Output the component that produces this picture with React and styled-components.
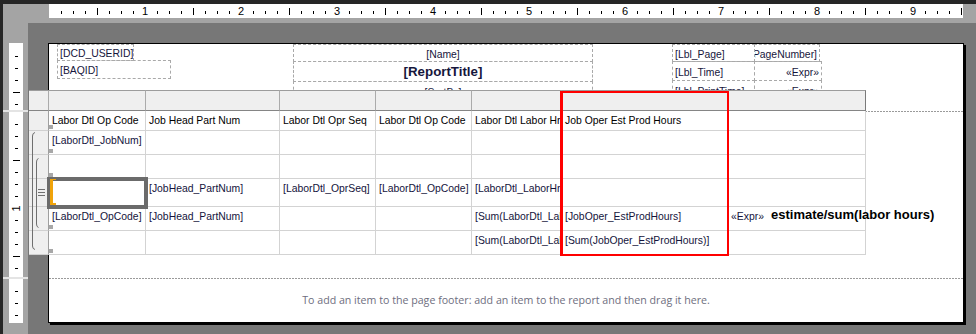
import React from "react";
import styled, { createGlobalStyle, css } from "styled-components";

const GlobalStyle = createGlobalStyle`
  html, body { margin:0; padding:0; background:#777; overflow:hidden; }
  body { font-family:"Liberation Sans", Arial, sans-serif; }
`;

const Frame = styled.div`
  width:976px;
  height:334px;
  box-sizing:border-box;
  border-left:3px solid #262626;
  background:#a4a4a4;
  display:flex;
  flex-direction:column;
`;

const TopStrip = styled.div`
  height:4px;
  background:#262626;
`;

const RulerRow = styled.div`
  height:14px;
  display:flex;
`;

const RulerPad = styled.div`
  width:${(p) => p.$w ? p.$w + "px" : "auto"};
  flex:${(p) => p.$w ? "none" : "1"};
  background:#a4a4a4;
`;

const Ruler = styled.div`
  width:914px;
  height:14px;
  background:#fff;
  display:flex;
  padding-left:6px;
  box-sizing:border-box;
  overflow:hidden;
`;

const Slot = styled.div`
  flex:0 0 12px;
  display:flex;
  align-items:center;
  justify-content:center;
`;

const HTick = styled.span`
  width:1px;
  height:${(p) => p.$long ? 7 : 3}px;
  margin-top:${(p) => p.$long ? 1 : 3}px;
  background:#000;
`;

const RulerNum = styled.span`
  font-size:11px;
  line-height:11px;
  color:#000;
`;

const Band = styled.div`
  height:5px;
  background:#a4a4a4;
`;

const Body = styled.div`
  flex:1;
  display:flex;
  min-height:0;
`;

const Rail = styled.div`
  width:25px;
  box-sizing:border-box;
  padding:20px 5px 0 6px;
  background:#a4a4a4;
  display:flex;
  flex-direction:column;
`;

const VSeg = styled.div`
  height:${(p) => p.$h}px;
  box-sizing:border-box;
  padding-top:${(p) => p.$pad}px;
  background:#fff;
  overflow:hidden;
  display:flex;
  flex-direction:column;
`;

const VSlot = styled.div`
  flex:0 0 12px;
  display:flex;
  align-items:center;
  justify-content:center;
`;

const VTick = styled.span`
  height:1px;
  width:${(p) => p.$long ? 7 : 3}px;
  background:#000;
`;

const VNum = styled.span`
  font-size:11px;
  line-height:11px;
  transform:rotate(-90deg);
`;

const VGap = styled.div`
  height:2px;
  margin:0 -5px 0 -6px;
  background:#e4e4e4;
`;

const Workspace = styled.div`
  flex:1;
  background:#777;
  padding:20px 0 0 20px;
`;

const Page = styled.div`
  position:relative;
  width:914px;
  height:278px;
  background:#fff;
  border:1px solid #000;
  box-shadow:2px 2px 0 #000;
  display:flex;
  flex-direction:column;
`;

const Section = styled.div`
  position:relative;
  height:${(p) => p.$h}px;
  flex:none;
`;

const Divider = styled.div`
  height:1px;
  flex:none;
  background:repeating-linear-gradient(90deg, #9a9a9a 0 2px, transparent 2px 3px);
`;

const Footer = styled.div`
  flex:1;
  display:flex;
  align-items:center;
  justify-content:center;
  padding-bottom:1px;
  font-family:"Open Sans", sans-serif;
  font-size:10.65px;
  color:#6e6e7e;
`;

const TextBox = styled.div`
  position:absolute;
  left:${(p) => p.$x}px;
  top:${(p) => p.$y}px;
  width:${(p) => p.$w}px;
  height:${(p) => p.$h}px;
  box-sizing:border-box;
  border:1px dashed #a9a9a9;
  ${(p) => p.$solidBottom && css`border-bottom:1px solid #b0b0b0;`}
  padding:${(p) => p.$bold ? "0 2px" : "2px 2px 0"};
  display:flex;
  align-items:center;
  justify-content:${(p) => p.$align === "right" ? "flex-end" : p.$align === "center" ? "center" : "flex-start"};
  overflow:hidden;
  white-space:nowrap;
  font-size:${(p) => p.$bold ? 13.3 : 10.4}px;
  font-weight:${(p) => p.$bold ? 700 : 400};
  color:#16163c;
`;

const Table = styled.div`
  position:absolute;
  left:-20px;
  top:46px;
  display:grid;
  grid-template-columns:20px 97px 134px 96px 96px 90px 166px 138px;
  grid-template-rows:21px 20px 24px 24px 28px 24px 24px;
  z-index:2;
`;

const BandCell = styled.div`
  box-sizing:border-box;
  background:#efefef;
  border-top:1px solid #9c9c9c;
  border-bottom:1px solid #858585;
  border-right:1px solid ${(p) => p.$end ? "#7a7a7a" : "#ababab"};
`;

const GutterCell = styled.div`
  box-sizing:border-box;
  background:#efefef;
  border-right:1px solid #9f9f9f;
  border-bottom:1px solid #d0d0d0;
`;

const Cell = styled.div`
  position:relative;
  box-sizing:border-box;
  background:#fff;
  border-right:1px solid #d3d3d3;
  border-bottom:1px solid #d3d3d3;
  padding:3px 3px 0;
  font-size:10.4px;
  line-height:13px;
  white-space:nowrap;
  overflow:hidden;
  color:${(p) => p.$label ? "#000" : "#14143c"};
  ${(p) => p.$notch && css`
    &::after {
      content:"";
      position:absolute;
      left:0;
      bottom:1px;
      width:4px;
      height:4px;
      background:#a8a8a8;
    }
  `}
  ${(p) => p.$selected && css`
    outline:4px solid #6b6b6b;
    outline-offset:-2px;
    z-index:1;
  `}
`;

const Bracket = styled.span`
  position:absolute;
  left:1px;
  top:-1px;
  width:3px;
  height:23px;
  border:3px solid #f0a30a;
  border-right:none;
  border-top-width:2px;
  border-bottom-width:2px;
  z-index:2;
`;

const GutterMarks = styled.svg`
  position:absolute;
  left:0;
  top:0;
  pointer-events:none;
  z-index:3;
`;

const RedFrame = styled.div`
  position:absolute;
  left:511px;
  top:47px;
  width:169px;
  height:165px;
  box-sizing:border-box;
  border:2px solid #f00;
  border-left-width:3px;
  z-index:4;
`;

const Note = styled.div`
  position:absolute;
  left:722px;
  top:163px;
  font-size:13px;
  font-weight:700;
  color:#000;
  white-space:nowrap;
  z-index:3;
`;

const columns = [97, 134, 96, 96, 90, 166, 138];

const labels = [
  "Labor Dtl Op Code",
  "Job Head Part Num",
  "Labor Dtl Opr Seq",
  "Labor Dtl Op Code",
  "Labor Dtl Labor Hrs",
  "Job Oper Est Prod Hours",
  "",
];

const rows = [
  { notch: true, cells: ["[LaborDtl_JobNum]", "", "", "", "", "", ""] },
  { notch: true, cells: ["", "", "", "", "", "", ""] },
  { selected: true, cells: ["", "[JobHead_PartNum]", "[LaborDtl_OprSeq]", "[LaborDtl_OpCode]", "[LaborDtl_LaborHrs]", "", ""] },
  { notch: true, cells: ["[LaborDtl_OpCode]", "[JobHead_PartNum]", "", "", "[Sum(LaborDtl_LaborHrs)]", "[JobOper_EstProdHours]", "«Expr»"] },
  { notch: true, cells: ["", "", "", "", "[Sum(LaborDtl_LaborHrs)]", "[Sum(JobOper_EstProdHours)]", ""] },
];

const TopRuler = () => {
  const slots = [];
  for (let i = 1; i <= 76; i++) {
    slots.push(
      <Slot key={i}>
        {i % 8 === 0 ? <RulerNum>{i / 8}</RulerNum> : <HTick $long={i % 4 === 0} />}
      </Slot>
    );
  }
  return <Ruler>{slots}</Ruler>;
};

const Segment = ({ h, pad, count }) => {
  const slots = [];
  for (let i = 1; i <= count; i++) {
    slots.push(
      <VSlot key={i}>
        {i % 8 === 0 ? <VNum>{i / 8}</VNum> : <VTick $long={i % 4 === 0} />}
      </VSlot>
    );
  }
  return <VSeg $h={h} $pad={pad}>{slots}</VSeg>;
};

const ReportTable = () => (
  <Table>
    <BandCell />
    {columns.map((w, i) => (
      <BandCell key={i} $end={i === columns.length - 1} />
    ))}
    <GutterCell />
    {labels.map((t, i) => (
      <Cell key={i} $label $notch={i === 0}>{t}</Cell>
    ))}
    {rows.map((r, ri) => (
      <React.Fragment key={ri}>
        <GutterCell />
        {r.cells.map((t, ci) => (
          <Cell key={ci} $selected={r.selected && ci === 0} $notch={r.notch && ci === 0}>
            {r.selected && ci === 0 ? <Bracket /> : t}
          </Cell>
        ))}
      </React.Fragment>
    ))}
    <GutterMarks width="20" height="165" viewBox="0 0 20 165">
      <path d="M6 42.5 Q3.5 43 3.5 46 L3.5 156 Q3.5 159 6 159.5" fill="none" stroke="#6f6f6f" />
      <path d="M9.5 68.5 Q7.5 69 7.5 72 L7.5 134 Q7.5 137 9.5 137.5" fill="none" stroke="#6f6f6f" />
      <g stroke="#707070">
        <line x1="9" x2="16" y1="99.5" y2="99.5" />
        <line x1="9" x2="16" y1="102.5" y2="102.5" />
        <line x1="9" x2="16" y1="105.5" y2="105.5" />
      </g>
    </GutterMarks>
  </Table>
);

const App = () => (
  <>
    <GlobalStyle />
    <Frame>
      <TopStrip />
      <RulerRow>
        <RulerPad $w={46} />
        <TopRuler />
        <RulerPad />
      </RulerRow>
      <Band />
      <Body>
        <Rail>
          <Segment h={67} pad={7} count={5} />
          <VGap />
          <Segment h={165} pad={6} count={13} />
          <VGap />
          <Segment h={44} pad={6} count={3} />
        </Rail>
        <Workspace>
          <Page>
            <Section $h={67}>
              <TextBox $x={8} $y={0} $w={77} $h={17}>[DCD_USERID]</TextBox>
              <TextBox $x={8} $y={16} $w={114} $h={19}>[BAQID]</TextBox>
              <TextBox $x={244} $y={0} $w={300} $h={18} $align="center">[Name]</TextBox>
              <TextBox $x={244} $y={17} $w={300} $h={21} $align="center" $bold>[ReportTitle]</TextBox>
              <TextBox $x={244} $y={37} $w={300} $h={20} $align="center">[SortBy]</TextBox>
              <TextBox $x={623} $y={0} $w={83} $h={18} $solidBottom>[Lbl_Page]</TextBox>
              <TextBox $x={705} $y={0} $w={66} $h={18} $align="right" $solidBottom>[PageNumber]</TextBox>
              <TextBox $x={623} $y={17} $w={83} $h={20}>[Lbl_Time]</TextBox>
              <TextBox $x={705} $y={17} $w={68} $h={20} $align="right">«Expr»</TextBox>
              <TextBox $x={623} $y={36} $w={83} $h={20}>[Lbl_PrintTime]</TextBox>
              <TextBox $x={705} $y={36} $w={68} $h={20} $align="right">«Expr»</TextBox>
            </Section>
            <Divider />
            <Section $h={166} />
            <Divider />
            <Footer>To add an item to the page footer: add an item to the report and then drag it here.</Footer>
            <ReportTable />
            <RedFrame />
            <Note>estimate/sum(labor hours)</Note>
          </Page>
        </Workspace>
      </Body>
    </Frame>
  </>
);

export default App;
